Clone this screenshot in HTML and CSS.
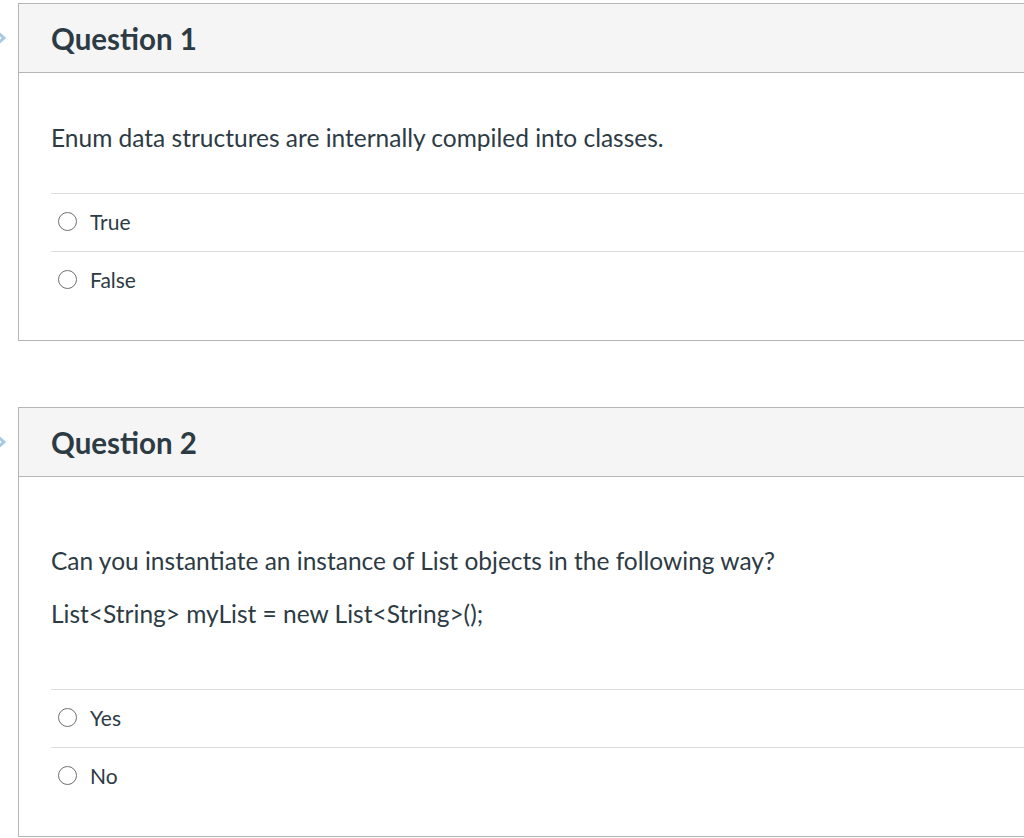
FILE: index.html
```html
<!DOCTYPE html>
<html lang="en">
<head>
    <meta charset="UTF-8">
    <meta name="viewport" content="width=device-width, initial-scale=1.0">
    <title>Quiz</title>
    <link rel="stylesheet" href="styles.css">
</head>
<body>
    <div class="quiz">
        <div class="question">
            <div class="question-marker">
                <svg width="18" height="20" viewBox="0 0 18 20"><path d="M-4 3 L4 10 L-4 17" fill="none" stroke="#a9c9e2" stroke-width="3"/></svg>
            </div>
            <div class="question-card">
                <div class="question-header">
                    <h2 class="question-title">Question 1</h2>
                </div>
                <div class="question-body">
                    <div class="question-text">Enum data structures are internally compiled into classes.</div>
                    <div class="answers">
                        <label class="answer"><span class="radio"></span>True</label>
                        <label class="answer"><span class="radio"></span>False</label>
                    </div>
                </div>
            </div>
        </div>

        <div class="question">
            <div class="question-marker">
                <svg width="18" height="20" viewBox="0 0 18 20"><path d="M-4 3 L4 10 L-4 17" fill="none" stroke="#a9c9e2" stroke-width="3"/></svg>
            </div>
            <div class="question-card">
                <div class="question-header">
                    <h2 class="question-title">Question 2</h2>
                </div>
                <div class="question-body">
                    <div class="question-text">
                        <p>Can you instantiate an instance of List objects in the following way?</p>
                        <p>List&lt;String&gt; myList = new List&lt;String&gt;();</p>
                    </div>
                    <div class="answers">
                        <label class="answer"><span class="radio"></span>Yes</label>
                        <label class="answer"><span class="radio"></span>No</label>
                    </div>
                </div>
            </div>
        </div>
    </div>
</body>
</html>
```

FILE: styles.css
```css
body {
    margin: 0;
    font-family: Lato, "Open Sans", sans-serif;
    color: #2d3b45;
    background-color: #ffffff;
    overflow: hidden;
}

.quiz {
    padding-top: 3px;
    display: flex;
    flex-direction: column;
    gap: 66px;
}

.question {
    display: flex;
    align-items: flex-start;
}

.question-marker {
    flex: 0 0 18px;
    padding-top: 25px;
}

.question-marker svg {
    display: block;
}

.question-card {
    flex: 0 0 1100px;
    border: 1px solid #b5b5b5;
}

/* Header */
.question-header {
    height: 68px;
    background-color: #f5f5f5;
    border-bottom: 1px solid #b5b5b5;
    display: flex;
    align-items: center;
    padding-left: 32px;
}

.question-title {
    margin: 0;
    font-size: 29.5px;
    font-weight: bold;
    color: #2d3b45;
}

/* Body */
.question-body {
    padding: 0 0 31px 32px;
}

.question-text {
    font-size: 24.5px;
    line-height: 33px;
    padding: 48px 0 39px;
}

.question-text p {
    margin: 19px 0 20px;
}

.answer {
    display: flex;
    align-items: center;
    gap: 13px;
    height: 58px;
    box-sizing: border-box;
    border-top: 1px solid #dcdcdc;
    padding-left: 7px;
    padding-bottom: 3px;
    font-size: 21px;
}

.radio {
    width: 17px;
    height: 17px;
    border: 1.5px solid #6f6f6f;
    border-radius: 50%;
    box-sizing: content-box;
}
```
